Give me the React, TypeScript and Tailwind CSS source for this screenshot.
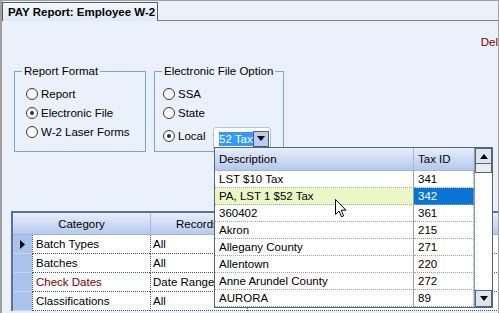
import React from 'react';

const taxRows = [
  { desc: 'LST $10 Tax', id: '341' },
  { desc: 'PA, LST 1 $52 Tax', id: '342', selected: true },
  { desc: '360402', id: '361' },
  { desc: 'Akron', id: '215' },
  { desc: 'Allegany County', id: '271' },
  { desc: 'Allentown', id: '220' },
  { desc: 'Anne Arundel County', id: '272' },
  { desc: 'AURORA', id: '89' },
];

const gridRows = [
  { cat: 'Batch Types', rec: 'All', current: true },
  { cat: 'Batches', rec: 'All' },
  { cat: 'Check Dates', rec: 'Date Range', red: true },
  { cat: 'Classifications', rec: 'All' },
];

const Radio: React.FC<{ checked?: boolean; label: string }> = ({ checked, label }) => (
  <div className="flex items-center h-[19px] gap-[3px]">
    <span className="flex items-center justify-center w-[12px] h-[12px] rounded-full border border-[#3a3a3a] bg-gradient-to-b from-[#f4f4f4] to-white">
      {checked && <span className="w-[4px] h-[4px] rounded-full bg-[#333]" />}
    </span>
    <span>{label}</span>
  </div>
);

const GroupBox: React.FC<{ title: string; className: string; children: React.ReactNode }> = ({ title, className, children }) => (
  <div className={`relative h-[81px] border border-[#7aa5dd] ${className}`}>
    <span className="absolute left-[7px] -top-[8px] px-[2px] bg-[#eaf1fb] leading-[14px]">{title}</span>
    {children}
  </div>
);

const Arrow: React.FC<{ up?: boolean }> = ({ up }) => (
  <svg width="8" height="5" viewBox="0 0 8 5">
    <path d={up ? 'M0 5 L4 0 L8 5 Z' : 'M0 0 L8 0 L4 5 Z'} fill="#000" />
  </svg>
);

export default function App() {
  return (
    <div className="relative w-[499px] h-[313px] overflow-hidden border-t border-l-2 border-r border-[#a0a0a0] bg-[#eaf1fb] font-['Liberation_Sans',Arial,sans-serif] text-[11.5px] leading-[14px] text-black">
      {/* tab strip */}
      <div className="flex h-[20px]">
        <div className="mt-[1px] h-[19px] w-[156px] shrink-0 border-l border-t border-r border-[#5c5c5c] bg-gradient-to-b from-[#f3f7fd] to-[#dfe9f8] pl-[5px] pt-[2px] font-bold whitespace-nowrap">
          PAY Report: Employee W-2
        </div>
        <div className="flex-1 border-b border-[#808080]" />
      </div>

      {/* top right action text */}
      <div className="flex justify-end mt-[14px] text-[#800000] whitespace-nowrap">Del</div>

      {/* option groups */}
      <div className="flex mt-[22px] ml-[12px] gap-[8px]">
        <GroupBox title="Report Format" className="w-[132px] pl-[11px] pt-[12px]">
          <Radio label="Report" />
          <Radio label="Electronic File" checked />
          <Radio label="W-2 Laser Forms" />
        </GroupBox>
        <GroupBox title="Electronic File Option" className="w-[130px] pl-[8px] pt-[12px]">
          <Radio label="SSA" />
          <Radio label="State" />
          <div className="flex items-center">
            <div className="w-[50px]">
              <Radio label="Local" checked />
            </div>
            <div className="mt-[5px] flex items-center h-[23px] w-[58px] rounded-[3px] border border-[#b4c6e2] bg-white pl-[5px]">
              <span className="h-[14px] w-[34px] overflow-hidden whitespace-nowrap bg-[#3399ff] text-white">52 Tax</span>
              <span className="flex items-center justify-center h-[16px] w-[16px] border border-[#4f5e7c] bg-[#b8cdf0]">
                <Arrow />
              </span>
            </div>
          </div>
        </GroupBox>
      </div>

      {/* criteria grid */}
      <div className="mt-[59px] ml-[9px] w-[500px] border-t-2 border-l-2 border-[#5d7096] bg-white">
        <div className="flex h-[22px] border-b border-[#9fb5de] bg-gradient-to-b from-[#e8eefa] to-[#b6caee]">
          <div className="w-[138px] border-r border-[#a7bbe0] flex items-center justify-center">Category</div>
          <div className="w-[97px] border-r border-[#a7bbe0] flex items-center pl-[25px] whitespace-nowrap">Records</div>
          <div className="flex-1" />
        </div>
        {gridRows.map((r) => (
          <div key={r.cat} className="flex h-[19px]">
            <div className="w-[19px] shrink-0 flex items-center justify-center bg-[#abc3ec] border-b border-[#c6d5f0]">
              {r.current && (
                <svg width="5" height="9" viewBox="0 0 5 9">
                  <path d="M0 0 L5 4.5 L0 9 Z" fill="#000" />
                </svg>
              )}
            </div>
            <div className={`w-[118px] shrink-0 border-l border-b border-dotted border-[#44557a] pl-[3px] flex items-center ${r.red ? 'text-[#800000]' : ''}`}>
              {r.cat}
            </div>
            <div className="w-[97px] shrink-0 border-l border-b border-dotted border-[#44557a] pl-[2px] flex items-center">{r.rec}</div>
            <div className="flex-1 border-l border-b border-dotted border-[#44557a]" />
          </div>
        ))}
      </div>

      {/* dropdown list */}
      <div className="absolute left-[212px] top-[146px] flex w-[279px] h-[161px] border border-[#56657f] bg-white">
        <div className="w-[259px]">
          <div className="flex h-[23px] border-b border-[#9fb5de] bg-gradient-to-b from-[#e8eefa] to-[#b4c8ed]">
            <div className="w-[199px] border-r border-[#a3b8de] pl-[4px] flex items-center">Description</div>
            <div className="flex-1 pl-[4px] flex items-center">Tax ID</div>
          </div>
          {taxRows.map((r) => (
            <div key={r.id} className="flex h-[17px]">
              <div className={`w-[199px] border-r border-[#a0a0a0] border-b-[1px] pl-[4px] flex items-center ${r.selected ? 'bg-[#ebf8c6]' : ''}`} style={{ borderBottomStyle: 'dotted' }}>
                {r.desc}
              </div>
              <div className={`flex-1 border-b border-r border-dotted border-[#a0a0a0] pl-[4px] flex items-center ${r.selected ? 'bg-[#0a74d6] text-white' : ''}`}>
                {r.id}
              </div>
            </div>
          ))}
        </div>
        <div className="w-[18px] flex flex-col bg-white border-l border-[#8d9ab2]">
          <div className="h-[16px] flex items-center justify-center border border-[#56657f] bg-[#dde4ee]">
            <Arrow up />
          </div>
          <div className="h-[9px] border border-[#56657f] border-t-0 bg-[#e7ecf3]" />
          <div className="flex-1" />
          <div className="h-[17px] flex items-center justify-center border border-[#56657f] bg-[#dde4ee]">
            <Arrow />
          </div>
        </div>
      </div>

      {/* mouse cursor */}
      <svg className="absolute left-[333px] top-[198px]" width="12" height="19" viewBox="0 0 12 19">
        <path d="M0.5 0.5 L0.5 15.5 L4 12 L6.5 17.8 L8.6 16.9 L6.2 11.2 L11 11.2 Z" fill="#fff" stroke="#000" strokeWidth="1" />
      </svg>
    </div>
  );
}
